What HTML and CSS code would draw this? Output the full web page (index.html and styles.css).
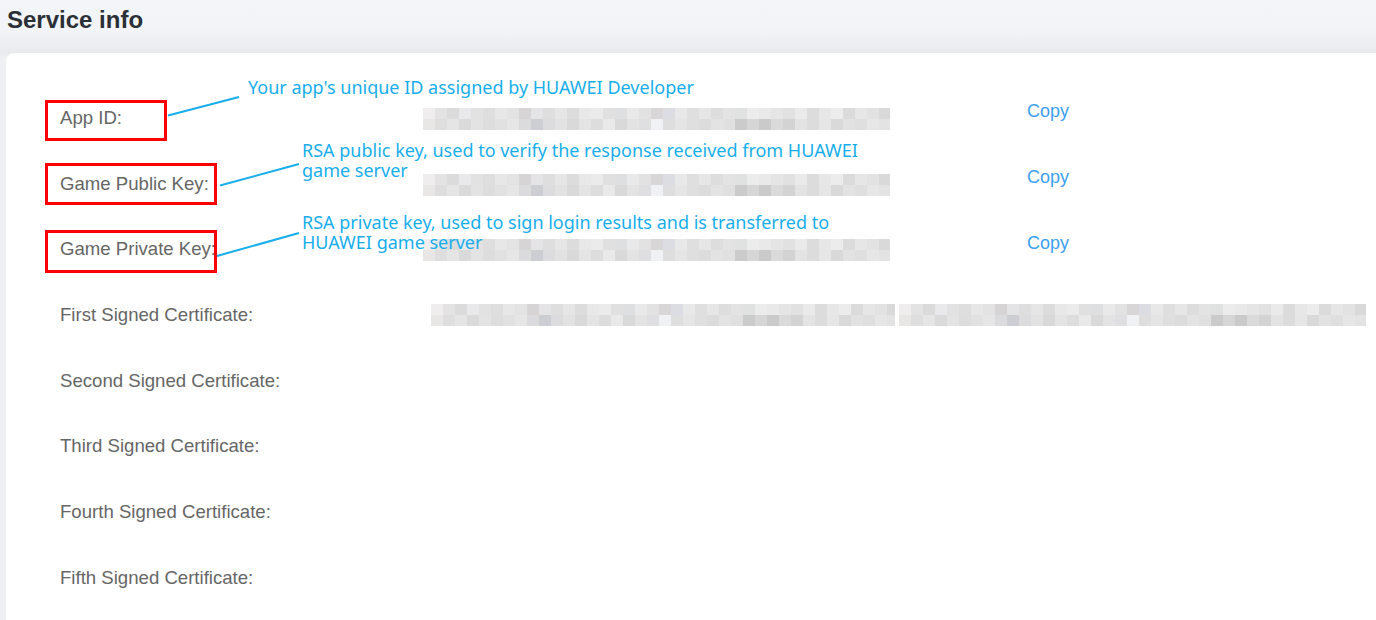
FILE: index.html
```html
<!DOCTYPE html>
<html>
<head>
<meta charset="utf-8">
<link rel="stylesheet" href="styles.css">
</head>
<body>
<h1 class="title">Service info</h1>
<div class="card">
  <div class="row">
    <div class="label">App ID:</div>
    <div class="bar"></div>
    <a class="copy">Copy</a>
  </div>
  <div class="row">
    <div class="label">Game Public Key:</div>
    <div class="bar"></div>
    <a class="copy">Copy</a>
  </div>
  <div class="row">
    <div class="label">Game Private Key:</div>
    <div class="bar"></div>
    <a class="copy">Copy</a>
  </div>
  <div class="row">
    <div class="label">First Signed Certificate:</div>
    <div class="bar bar-cert"></div>
    <div class="bar bar-cert2"></div>
  </div>
  <div class="row">
    <div class="label">Second Signed Certificate:</div>
  </div>
  <div class="row">
    <div class="label">Third Signed Certificate:</div>
  </div>
  <div class="row">
    <div class="label">Fourth Signed Certificate:</div>
  </div>
  <div class="row">
    <div class="label">Fifth Signed Certificate:</div>
  </div>

  <div class="redbox box1"></div>
  <div class="redbox box2"></div>
  <div class="redbox box3"></div>

  <svg class="lines" width="400" height="260" viewBox="0 0 400 260">
    <line x1="162" y1="62.5" x2="233" y2="44" />
    <line x1="214" y1="132.5" x2="293" y2="111" />
    <line x1="211" y1="203" x2="293" y2="180" />
  </svg>

  <div class="note note1">Your app's unique ID assigned by HUAWEI Developer</div>
  <div class="note note2">RSA public key, used to verify the response received from HUAWEI<br>game server</div>
  <div class="note note3">RSA private key, used to sign login results and is transferred to<br>HUAWEI game server</div>
</div>
</body>
</html>
```
FILE: styles.css
```css
html, body {
  margin: 0;
  padding: 0;
}
body {
  width: 1376px;
  height: 620px;
  overflow: hidden;
  background: linear-gradient(to bottom, #f3f6f9 0, #f2f4f7 30px, #e9eaed 53px, #eef0f3 60px);
  font-family: "Liberation Sans", Arial, sans-serif;
}
.title {
  margin: 0;
  height: 53px;
  box-sizing: border-box;
  padding: 6px 0 0 7px;
  font-size: 24px;
  line-height: 28px;
  font-weight: bold;
  color: #2b2f36;
}
.card {
  position: relative;
  margin-left: 6px;
  height: 567px;
  box-sizing: border-box;
  padding-top: 32px;
  background: #fff;
  border-radius: 8px 0 0 0;
}
.row {
  display: flex;
  align-items: center;
  height: 65.7px;
}
.label {
  width: 417px;
  box-sizing: border-box;
  padding-left: 54px;
  font-size: 18.6px;
  color: #666;
  flex: none;
}
.bar {
  flex: none;
  width: 467px;
  height: 22px;
  margin-top: 2px;
  background:
    linear-gradient(to right,
      #efeded 0 12px, #e3e3e3 12px 24px, #dbdbdb 24px 36px, #e9e9eb 36px 48px,
      #e2e2e2 48px 60px, #dedede 60px 72px, #e7e7e7 72px 84px, #e3e3e3 84px 96px,
      #d6d4d4 96px 108px, #e4e4e6 108px 120px, #dedede 120px 132px, #e6e6e6 132px 144px,
      #dcdcdc 144px 156px, #e8e8e8 156px 168px, #ebebeb 168px 180px, #e0e0e0 180px 192px,
      #dedfe0 192px 204px, #e9e9e9 204px 216px, #e2e2e2 216px 228px, #d8d6d7 228px 240px,
      #dcdde3 240px 252px, #e8e8e8 252px 264px, #dfdfdf 264px 276px, #e6e6e6 276px 288px,
      #dddddd 288px 300px, #e3e3e3 300px 312px, #e0e1e1 312px 324px, #ececec 324px 336px,
      #e9e9e9 336px 348px, #e5e5e5 348px 360px, #e1e1e1 360px 372px, #eaeaea 372px 384px,
      #dcdcdc 384px 396px, #e7e7e7 396px 408px, #ececec 408px 420px, #dbdbdb 420px 432px,
      #e6e6e6 432px 444px, #e2e2e2 444px 456px, #d9d9d9 456px 468px) top / 100% 50% no-repeat,
    linear-gradient(to right,
      #e9e6e6 0 12px, #dedede 12px 24px, #e5e5e5 24px 36px, #dadada 36px 48px,
      #e3e3e3 48px 60px, #dddddd 60px 72px, #e1e1e1 72px 84px, #e6e6e6 84px 96px,
      #dbdbdd 96px 108px, #cdcdd4 108px 120px, #dcdcdf 120px 132px, #e2e2e2 132px 144px,
      #d9d9d9 144px 156px, #e4e4e4 156px 168px, #dddddd 168px 180px, #e9e9e9 180px 192px,
      #d9d9d9 192px 204px, #e3e3e3 204px 216px, #dfdfe1 216px 228px, #eff1f4 228px 240px,
      #dedede 240px 252px, #e5e5e5 252px 264px, #dfdfdf 264px 276px, #dcdcdc 276px 288px,
      #e3e3e3 288px 300px, #e0e0e0 300px 312px, #cbcbcb 312px 324px, #d6d6d6 324px 336px,
      #cacaca 336px 348px, #dadada 348px 360px, #d3d3d3 360px 372px, #e3e3e3 372px 384px,
      #dcdcdc 384px 396px, #e6e6e6 396px 408px, #d9d9d9 408px 420px, #e2e2e2 420px 432px,
      #dfdfdf 432px 444px, #e6e6e6 444px 456px, #e3e3e3 456px 468px) bottom / 100% 50% no-repeat;
}
.bar-cert {
  width: 464px;
  margin-left: 8px;
  margin-top: 0;
}
.bar-cert2 {
  width: 467px;
  margin-left: 4px;
  margin-top: 0;
}
.copy {
  margin-left: 137px;
  margin-bottom: 12px;
  font-size: 18px;
  color: #3c9ff0;
  cursor: pointer;
}
.redbox {
  position: absolute;
  left: 39px;
  box-sizing: border-box;
  border: 3px solid #f00;
}
.box1 { top: 47px; width: 122px; height: 41px; }
.box2 { top: 110px; width: 172px; height: 42px; }
.box3 { top: 177px; width: 172px; height: 43px; }
.lines {
  position: absolute;
  left: 0;
  top: 0;
}
.lines line {
  stroke: #17aeec;
  stroke-width: 2;
}
.note {
  position: absolute;
  font-family: "Noto Sans", "Open Sans", sans-serif;
  font-size: 18px;
  line-height: 20px;
  color: #17aeec;
  white-space: nowrap;
}
.note1 { left: 242px; top: 24px; }
.note2 { left: 296px; top: 87px; }
.note3 { left: 296px; top: 159px; }
```
